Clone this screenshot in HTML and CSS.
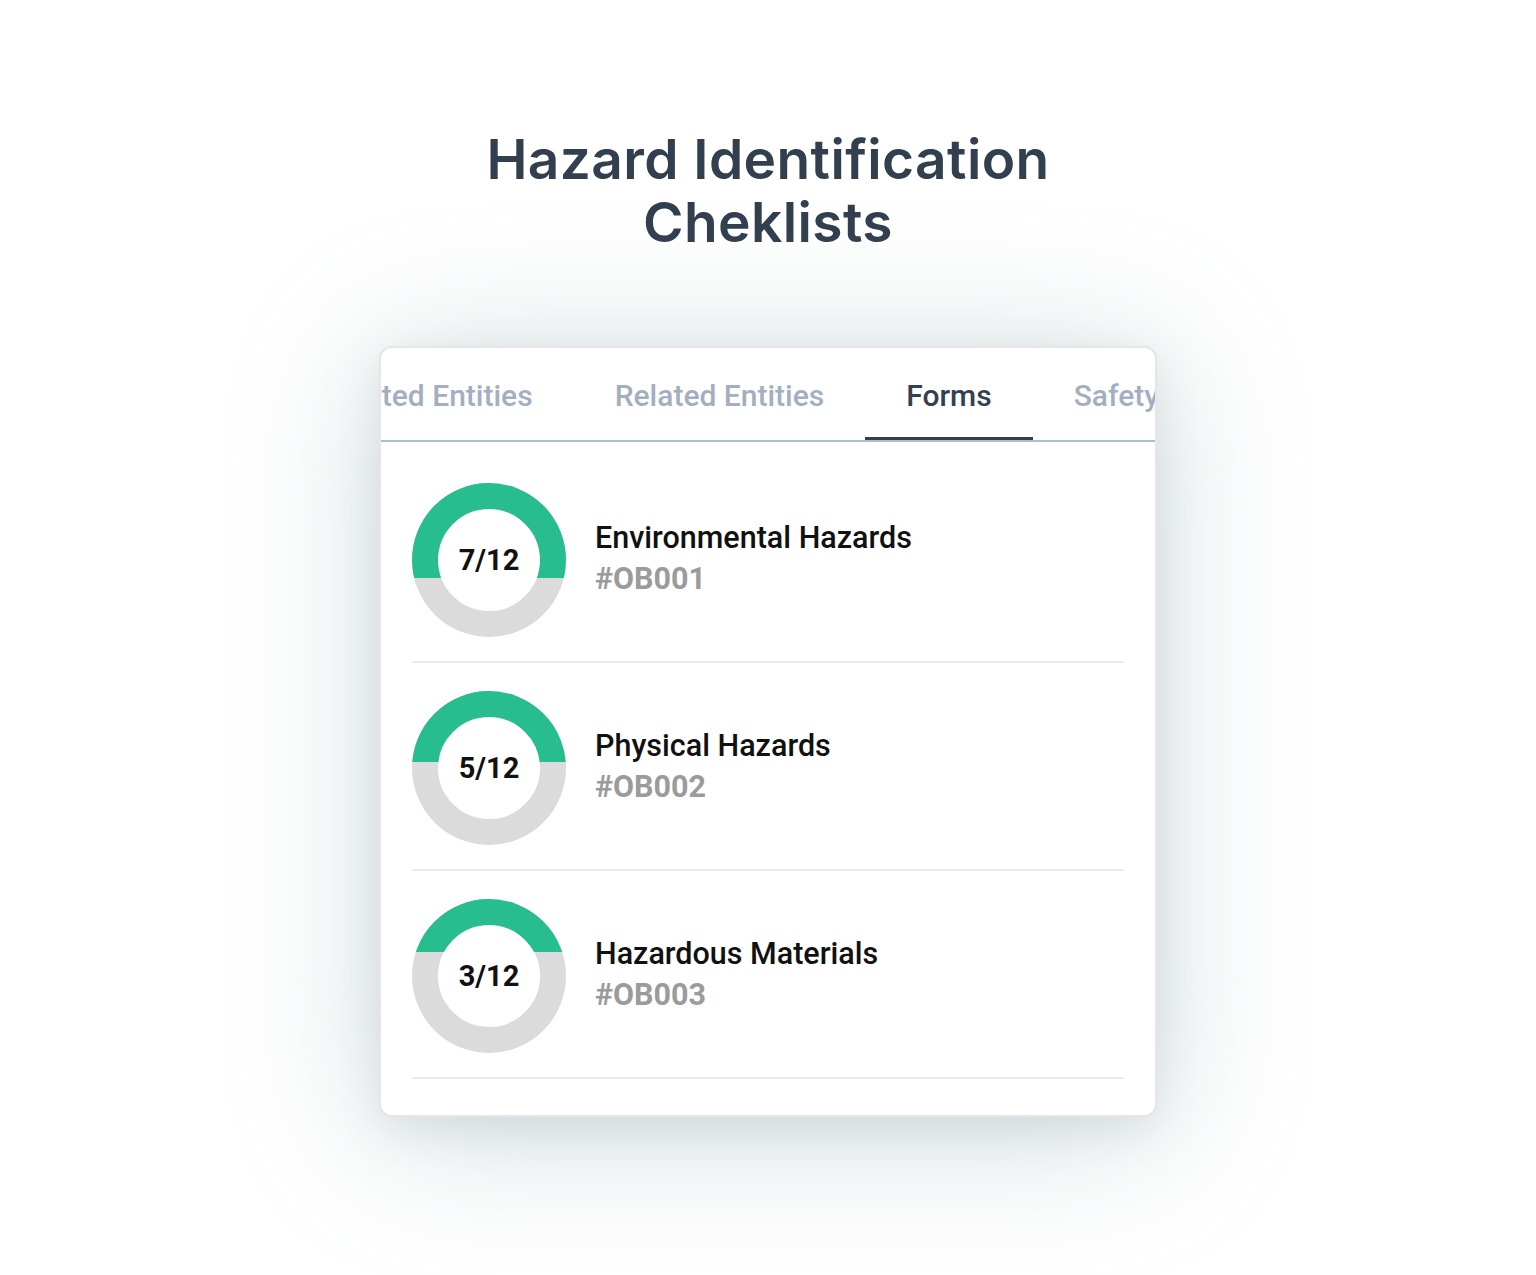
FILE: index.html
```html
<!DOCTYPE html>
<html>
<head>
<meta charset="utf-8">
<link rel="stylesheet" href="styles.css">
</head>
<body>
<main class="page">
  <h1 class="title">Hazard Identification<br>Cheklists</h1>
  <section class="card">
    <nav class="tabs">
      <div class="tab-track">
        <span class="tab">Related Entities</span>
        <span class="tab">Related Entities</span>
        <span class="tab active">Forms</span>
        <span class="tab">Safety</span>
      </div>
    </nav>
    <ul class="list">
      <li class="row">
        <div class="donut">
          <svg viewBox="0 0 154 154" width="154" height="154">
            <defs><clipPath id="c1"><rect x="0" y="0" width="154" height="95"/></clipPath></defs>
            <circle cx="77" cy="77" r="64" fill="none" stroke="#dbdbdb" stroke-width="26"/>
            <circle cx="77" cy="77" r="64" fill="none" stroke="#27bd8f" stroke-width="26" clip-path="url(#c1)"/>
          </svg>
          <span class="count">7/12</span>
        </div>
        <div class="info">
          <div class="name">Environmental Hazards</div>
          <div class="code">#OB001</div>
        </div>
      </li>
      <li class="row">
        <div class="donut">
          <svg viewBox="0 0 154 154" width="154" height="154">
            <defs><clipPath id="c2"><rect x="0" y="0" width="154" height="71"/></clipPath></defs>
            <circle cx="77" cy="77" r="64" fill="none" stroke="#dbdbdb" stroke-width="26"/>
            <circle cx="77" cy="77" r="64" fill="none" stroke="#27bd8f" stroke-width="26" clip-path="url(#c2)"/>
          </svg>
          <span class="count">5/12</span>
        </div>
        <div class="info">
          <div class="name">Physical Hazards</div>
          <div class="code">#OB002</div>
        </div>
      </li>
      <li class="row">
        <div class="donut">
          <svg viewBox="0 0 154 154" width="154" height="154">
            <defs><clipPath id="c3"><rect x="0" y="0" width="154" height="53"/></clipPath></defs>
            <circle cx="77" cy="77" r="64" fill="none" stroke="#dbdbdb" stroke-width="26"/>
            <circle cx="77" cy="77" r="64" fill="none" stroke="#27bd8f" stroke-width="26" clip-path="url(#c3)"/>
          </svg>
          <span class="count">3/12</span>
        </div>
        <div class="info">
          <div class="name">Hazardous Materials</div>
          <div class="code">#OB003</div>
        </div>
      </li>
    </ul>
  </section>
</main>
</body>
</html>
```

FILE: styles.css
```css
html, body {
  margin: 0;
  padding: 0;
  background: #ffffff;
}
.page {
  width: 1536px;
  height: 1275px;
  display: flex;
  flex-direction: column;
  align-items: center;
  overflow: hidden;
}
.title {
  margin: 128px 0 0;
  font-family: "Inter", "Open Sans", sans-serif;
  font-weight: 600;
  font-size: 55px;
  line-height: 63px;
  text-align: center;
  color: #323f4f;
  letter-spacing: 0.4px;
}
.card {
  margin-top: 92px;
  width: 774px;
  height: 767px;
  border: 2px solid #e4e6e8;
  border-radius: 13px;
  background: #fff;
  box-shadow: 0 12px 40px rgba(110, 140, 150, 0.16), 0 14px 150px rgba(110, 140, 150, 0.32);
  overflow: hidden;
  box-sizing: content-box;
}
.tabs {
  height: 92px;
  border-bottom: 2px solid #b0bcc8;
  overflow: hidden;
  position: relative;
}
.tab-track {
  display: flex;
  height: 100%;
  margin-left: -99px;
  white-space: nowrap;
}
.tab {
  font-family: "Roboto", sans-serif;
  font-weight: 500;
  font-size: 30px;
  color: #a3afc1;
  padding: 0 41px;
  display: flex;
  align-items: center;
  padding-top: 2px;
  box-sizing: border-box;
  height: 100%;
}
.tab:nth-child(n+2) {
  margin-left: 0;
}
.tab.active {
  color: #344050;
  box-shadow: inset 0 -3px 0 #344050;
}
.list {
  list-style: none;
  margin: 0;
  padding: 13px 31px 0;
}
.row {
  display: flex;
  align-items: center;
  padding: 28px 0 24px;
  border-bottom: 2px solid #e8ebee;
}
.donut {
  position: relative;
  width: 154px;
  height: 154px;
  flex: none;
}
.donut svg {
  display: block;
}
.count {
  position: absolute;
  inset: 0;
  display: flex;
  align-items: center;
  justify-content: center;
  font-family: "Roboto", sans-serif;
  font-weight: 700;
  font-size: 29px;
  color: #111;
}
.info {
  margin-left: 29px;
  font-family: "Roboto", sans-serif;
  font-size: 30.5px;
  line-height: 41px;
  padding-bottom: 4px;
}
.name {
  font-weight: 500;
  color: #111;
}
.code {
  font-weight: 700;
  color: #9b9b9b;
}
```
